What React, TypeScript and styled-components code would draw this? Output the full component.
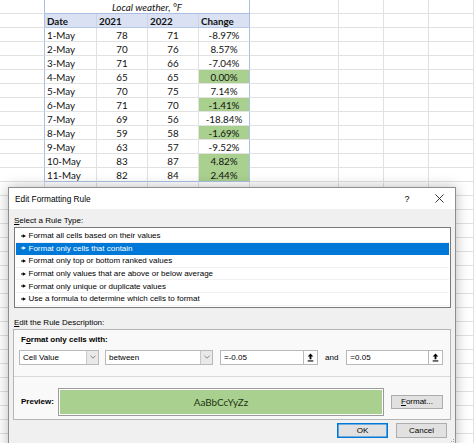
import React from "react";
import styled, { createGlobalStyle } from "styled-components";

const GlobalStyle = createGlobalStyle`
  html, body { margin: 0; padding: 0; background: #fff; overflow: hidden; }
`;

const GRID = "#e1e1e1";
const TBL = "#a9bfe4";
const GREEN = "#a9d08e";

const Page = styled.div`
  position: relative;
  width: 474px;
  height: 443px;
  overflow: hidden;
  background: #fff;
`;

const Sheet = styled.div`
  display: grid;
  grid-template-columns: 45px 52px 51px 51px 51px 89px 45px 45px 45px;
  grid-auto-rows: 14px;
  font-family: Lato, "Liberation Sans", sans-serif;
  font-size: 9.8px;
  color: #111;
`;

const Cell = styled.div<{
  $align?: "left" | "center";
  $fill?: string;
  $bold?: boolean;
  $italic?: boolean;
  $span?: number;
  $right?: string;
  $bottom?: string;
}>`
  box-sizing: border-box;
  display: flex;
  align-items: center;
  justify-content: ${(p) => (p.$align === "center" ? "center" : "flex-start")};
  padding: 0 2px;
  white-space: nowrap;
  overflow: hidden;
  background: ${(p) => p.$fill || "transparent"};
  border-right: 1px solid ${(p) => p.$right || GRID};
  border-bottom: 1px solid ${(p) => p.$bottom || GRID};
  font-weight: ${(p) => (p.$bold ? 700 : 400)};
  font-style: ${(p) => (p.$italic ? "italic" : "normal")};
  grid-column: ${(p) => (p.$span ? `span ${p.$span}` : "auto")};
`;

const rows: [string, number, number, string, boolean][] = [
  ["1-May", 78, 71, "-8.97%", false],
  ["2-May", 70, 76, "8.57%", false],
  ["3-May", 71, 66, "-7.04%", false],
  ["4-May", 65, 65, "0.00%", true],
  ["5-May", 70, 75, "7.14%", false],
  ["6-May", 71, 70, "-1.41%", true],
  ["7-May", 69, 56, "-18.84%", false],
  ["8-May", 59, 58, "-1.69%", true],
  ["9-May", 63, 57, "-9.52%", false],
  ["10-May", 83, 87, "4.82%", true],
  ["11-May", 82, 84, "2.44%", true],
];

const TrailingCells = () => (
  <>
    <Cell />
    <Cell />
    <Cell />
    <Cell />
  </>
);

/* ---------- dialog ---------- */

const Dialog = styled.div`
  position: absolute;
  left: 8px;
  top: 187px;
  width: 448px;
  height: 266px;
  box-sizing: border-box;
  border: 1px solid #8e8e8e;
  background: #f0f0f0;
  box-shadow: 0 0 12px rgba(0, 0, 0, 0.28);
  font-family: "Liberation Sans", Arial, sans-serif;
  font-size: 8px;
  color: #000;
  display: flex;
  flex-direction: column;
`;

const TitleBar = styled.div`
  height: 21px;
  flex: none;
  background: #fff;
  display: flex;
  align-items: center;
  padding-left: 6px;
  font-size: 8.3px;
`;

const TitleText = styled.div`
  flex: 1;
`;

const TitleButton = styled.div`
  width: 32px;
  height: 21px;
  display: flex;
  align-items: center;
  justify-content: center;
  font-size: 9px;
`;

const Body = styled.div`
  display: flex;
  flex-direction: column;
  padding: 0 4px 0 5px;
`;

const Label = styled.div<{ $top: number }>`
  height: 10px;
  line-height: 10px;
  margin-top: ${(p) => p.$top}px;
  margin-bottom: 1px;
  white-space: nowrap;
`;

const U = styled.span`
  text-decoration: underline;
  text-underline-offset: 1px;
`;

const ListBox = styled.div`
  border: 1px solid #7a7a7a;
  background: #fff;
  padding: 2px 1px 1px;
  display: flex;
  flex-direction: column;
`;

const ListItem = styled.div<{ $selected?: boolean }>`
  height: 12.6px;
  box-sizing: border-box;
  display: flex;
  align-items: center;
  gap: 2.5px;
  padding-left: 5px;
  background: ${(p) => (p.$selected ? "#0078d7" : "transparent")};
  color: ${(p) => (p.$selected ? "#fff" : "#000")};
  border-bottom: 1px solid ${(p) => (p.$selected ? "#0078d7" : "#f1f1f1")};
  white-space: nowrap;
`;

const DescBox = styled.div`
  margin-left: -1px;
  border: 1px solid #b5b5b5;
  background: #f9f9f9;
  display: flex;
  flex-direction: column;
`;

const DescTop = styled.div`
  padding: 5px 7px 11px 5px;
  display: flex;
  flex-direction: column;
  gap: 5px;
`;

const BoldLabel = styled.div<{ $width?: number }>`
  font-weight: 700;
  height: 10px;
  line-height: 10px;
  margin-left: 2px;
  white-space: nowrap;
  width: ${(p) => (p.$width ? `${p.$width}px` : "auto")};
  flex: none;
`;

const ControlRow = styled.div`
  display: flex;
  align-items: center;
  height: 15px;
`;

const Combo = styled.div<{ $width: number; $gap: number }>`
  box-sizing: border-box;
  width: ${(p) => p.$width}px;
  height: 15px;
  margin-right: ${(p) => p.$gap}px;
  border: 1px solid #b9b9b9;
  background: #fff;
  display: flex;
  align-items: stretch;
  flex: none;
`;

const ComboText = styled.div`
  flex: 1;
  display: flex;
  align-items: center;
  padding-left: 3px;
  white-space: nowrap;
`;

const ComboButton = styled.div`
  width: 12px;
  box-sizing: border-box;
  border-left: 1px solid #c8c8c8;
  background: #e9e9e9;
  display: flex;
  align-items: center;
  justify-content: center;
`;

const RefButton = styled.div`
  width: 14px;
  box-sizing: border-box;
  border-left: 1px solid #b9b9b9;
  background: #fdfdfd;
  display: flex;
  align-items: center;
  justify-content: center;
`;

const AndText = styled.div`
  margin-right: 8px;
  white-space: nowrap;
`;

const Separator = styled.div`
  height: 1px;
  background: #dadada;
`;

const DescBottom = styled.div`
  padding: 11px 7px 3px 5px;
  display: flex;
  align-items: center;
`;

const PreviewFrame = styled.div`
  width: 326px;
  height: 28px;
  box-sizing: border-box;
  border: 1px solid #9c9c9c;
  padding: 1px;
  background: #fff;
  flex: none;
`;

const PreviewFill = styled.div`
  height: 100%;
  background: ${GREEN};
  display: flex;
  align-items: center;
  justify-content: center;
  font-family: Lato, "Liberation Sans", sans-serif;
  font-size: 9.9px;
  color: #1f3316;
`;

const PushButton = styled.div<{ $width: number; $default?: boolean }>`
  box-sizing: border-box;
  width: ${(p) => p.$width}px;
  height: 15px;
  border: 1px solid ${(p) => (p.$default ? "#0078d7" : "#adadad")};
  box-shadow: ${(p) => (p.$default ? "inset 0 0 0 0.6px #0078d7" : "none")};
  background: #e1e1e1;
  display: flex;
  align-items: center;
  justify-content: center;
  white-space: nowrap;
  flex: none;
`;

const FormatButton = styled(PushButton)`
  margin-left: auto;
  height: 14px;
`;

const Footer = styled.div`
  display: flex;
  justify-content: flex-end;
  gap: 8px;
  margin-top: 3px;
  padding-right: 4px;
`;

const Grip = styled.svg`
  position: absolute;
  left: 440px;
  top: 247px;
`;

const ItemArrow: React.FC<{ color: string }> = ({ color }) => (
  <svg width="5" height="4" viewBox="0 0 5 4" style={{ flex: "none" }}>
    <rect x="0" y="1.5" width="2.5" height="1" fill={color} />
    <polygon points="1.8,0.3 5,2 1.8,3.7" fill={color} />
  </svg>
);

const Chevron = () => (
  <svg width="6" height="4" viewBox="0 0 6 4">
    <polyline points="0.5,0.8 3,3.2 5.5,0.8" fill="none" stroke="#7a7a7a" strokeWidth="0.9" />
  </svg>
);

const RefIcon = () => (
  <svg width="7" height="9" viewBox="0 0 7 9">
    <polygon points="3.5,0.5 6.3,3.6 4.4,3.6 4.4,6.3 2.6,6.3 2.6,3.6 0.7,3.6" fill="#000" />
    <rect x="0.7" y="7.4" width="5.6" height="1.1" fill="#000" />
  </svg>
);

const CloseIcon = () => (
  <svg width="9" height="9" viewBox="0 0 9 9">
    <path d="M0.5 0.5 L8.5 8.5 M8.5 0.5 L0.5 8.5" stroke="#222" strokeWidth="0.9" fill="none" />
  </svg>
);

const ruleTypes = [
  "Format all cells based on their values",
  "Format only cells that contain",
  "Format only top or bottom ranked values",
  "Format only values that are above or below average",
  "Format only unique or duplicate values",
  "Use a formula to determine which cells to format",
];

export default function App() {
  const emptyRows = Array.from({ length: 19 });
  return (
    <Page>
      <GlobalStyle />
      <Sheet>
        {/* title row */}
        <Cell $right={TBL} />
        <Cell $span={4} $align="center" $italic $right={TBL} $bottom={TBL}>
          Local weather, °F
        </Cell>
        <TrailingCells />

        {/* header row */}
        <Cell $right={TBL} />
        <Cell $fill="#d9e1f2" $bold $right="#c7d4ec" $bottom="#b8c9e8">Date</Cell>
        <Cell $fill="#d9e1f2" $bold $right="#c7d4ec" $bottom="#b8c9e8">2021</Cell>
        <Cell $fill="#d9e1f2" $bold $right="#c7d4ec" $bottom="#b8c9e8">2022</Cell>
        <Cell $fill="#d9e1f2" $bold $right={TBL} $bottom="#b8c9e8">Change</Cell>
        <TrailingCells />

        {rows.map(([d, a, b, c, g], i) => {
          const last = i === rows.length - 1;
          const bottom = last ? TBL : undefined;
          return (
            <React.Fragment key={d}>
              <Cell $right={TBL} />
              <Cell $bottom={bottom}>{d}</Cell>
              <Cell $align="center" $bottom={bottom}>{a}</Cell>
              <Cell $align="center" $bottom={bottom}>{b}</Cell>
              <Cell
                $align="center"
                $fill={g ? GREEN : undefined}
                $right={TBL}
                $bottom={last ? TBL : g && rows[i + 1]?.[4] ? GREEN : undefined}
              >
                {c}
              </Cell>
              <TrailingCells />
            </React.Fragment>
          );
        })}

        {emptyRows.map((_, i) => (
          <React.Fragment key={`e${i}`}>
            <Cell />
            <Cell />
            <Cell />
            <Cell />
            <Cell />
            <TrailingCells />
          </React.Fragment>
        ))}
      </Sheet>

      <Dialog>
        <TitleBar>
          <TitleText>Edit Formatting Rule</TitleText>
          <TitleButton>?</TitleButton>
          <TitleButton>
            <CloseIcon />
          </TitleButton>
        </TitleBar>
        <Body>
          <Label $top={7}>
            <U>S</U>elect a Rule Type:
          </Label>
          <ListBox>
            {ruleTypes.map((t, i) => (
              <ListItem key={t} $selected={i === 1}>
                <ItemArrow color={i === 1 ? "#fff" : "#000"} />
                {t}
              </ListItem>
            ))}
          </ListBox>
          <Label $top={10}>
            <U>E</U>dit the Rule Description:
          </Label>
          <DescBox>
            <DescTop>
              <BoldLabel>
                F<U>o</U>rmat only cells with:
              </BoldLabel>
              <ControlRow>
                <Combo $width={80} $gap={6}>
                  <ComboText>Cell Value</ComboText>
                  <ComboButton>
                    <Chevron />
                  </ComboButton>
                </Combo>
                <Combo $width={108} $gap={7}>
                  <ComboText>between</ComboText>
                  <ComboButton>
                    <Chevron />
                  </ComboButton>
                </Combo>
                <Combo $width={98} $gap={7}>
                  <ComboText>=-0.05</ComboText>
                  <RefButton>
                    <RefIcon />
                  </RefButton>
                </Combo>
                <AndText>and</AndText>
                <Combo $width={97} $gap={0}>
                  <ComboText>=0.05</ComboText>
                  <RefButton>
                    <RefIcon />
                  </RefButton>
                </Combo>
              </ControlRow>
            </DescTop>
            <Separator />
            <DescBottom>
              <BoldLabel $width={37}>Preview:</BoldLabel>
              <PreviewFrame>
                <PreviewFill>AaBbCcYyZz</PreviewFill>
              </PreviewFrame>
              <FormatButton $width={52}>
                <U>F</U>ormat...
              </FormatButton>
            </DescBottom>
          </DescBox>
          <Footer>
            <PushButton $width={51} $default>
              OK
            </PushButton>
            <PushButton $width={51}>Cancel</PushButton>
          </Footer>
        </Body>
        <Grip width="8" height="8" viewBox="0 0 8 8">
          {[
            [6, 2],
            [6, 4],
            [4, 4],
            [6, 6],
            [4, 6],
            [2, 6],
          ].map(([x, y]) => (
            <rect key={`${x}-${y}`} x={x} y={y} width="1" height="1" fill="#a0a0a0" />
          ))}
        </Grip>
      </Dialog>
    </Page>
  );
}
